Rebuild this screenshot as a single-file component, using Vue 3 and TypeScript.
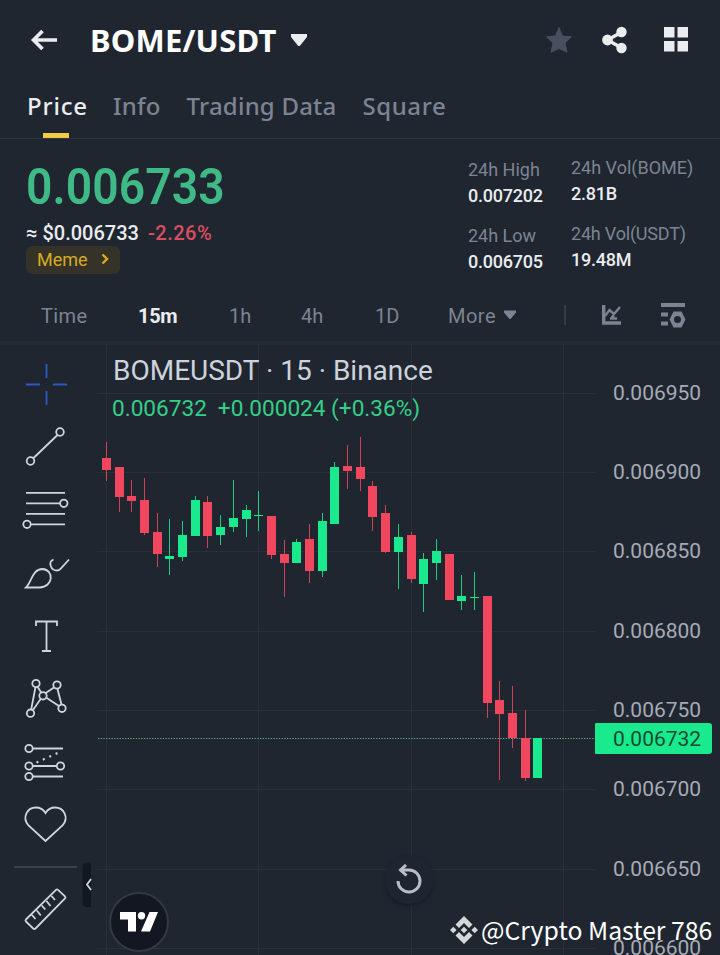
<script setup lang="ts">
interface Candle {
  x: number
  high: number
  top: number
  bottom: number
  low: number
  up: boolean
}

const tabs: string[] = ['Price', 'Info', 'Trading Data', 'Square']

const stats = [
  { id: 'high', label: '24h High', value: '0.007202' },
  { id: 'vol-base', label: '24h Vol(BOME)', value: '2.81B' },
  { id: 'low', label: '24h Low', value: '0.006705' },
  { id: 'vol-quote', label: '24h Vol(USDT)', value: '19.48M' },
]

const intervals: string[] = ['Time', '15m', '1h', '4h', '1D']

// Vertical positions are measured from the top edge of the chart panel (y = 345).
const TOP = 345
const rows: [number, number, number, number, number, 0 | 1][] = [
  [102, 442, 458, 470, 481, 0],
  [115, 467, 467, 497, 512, 0],
  [127, 480, 496, 501, 512, 0],
  [140, 478, 500, 533, 535, 0],
  [153, 513, 532, 554, 567, 0],
  [165, 519, 556, 559, 575, 1],
  [178, 521, 535, 557, 561, 1],
  [191, 496, 500, 536, 536, 1],
  [203, 496, 502, 536, 548, 0],
  [216, 515, 527, 535, 545, 1],
  [229, 480, 518, 527, 532, 1],
  [242, 505, 510, 519, 537, 1],
  [254, 491, 515, 516, 531, 1],
  [267, 516, 516, 555, 559, 0],
  [280, 540, 554, 563, 597, 0],
  [292, 539, 542, 563, 563, 1],
  [305, 524, 539, 571, 583, 0],
  [318, 513, 521, 571, 577, 1],
  [330, 462, 467, 524, 524, 1],
  [343, 445, 466, 471, 489, 0],
  [356, 437, 467, 479, 491, 0],
  [368, 481, 486, 517, 531, 0],
  [381, 505, 513, 552, 553, 0],
  [394, 524, 537, 552, 589, 1],
  [407, 532, 535, 579, 583, 0],
  [419, 553, 559, 584, 612, 1],
  [432, 539, 551, 563, 580, 1],
  [445, 554, 554, 600, 600, 0],
  [457, 575, 596, 601, 610, 1],
  [470, 572, 597, 598, 610, 1],
  [483, 596, 596, 703, 718, 0],
  [495, 681, 700, 714, 780, 0],
  [508, 686, 713, 738, 748, 0],
  [521, 710, 738, 778, 781, 0],
  [533, 738, 738, 778, 778, 1],
]
const candles: Candle[] = rows.map(([x, high, top, bottom, low, up]) => ({
  x: x - 97,
  high: high - TOP,
  top: top - TOP,
  bottom: bottom - TOP,
  low: low - TOP,
  up: up === 1,
}))

const levels = [
  { y: 48, label: '0.006950' },
  { y: 127, label: '0.006900' },
  { y: 206, label: '0.006850' },
  { y: 286, label: '0.006800' },
  { y: 365, label: '0.006750' },
  { y: 444, label: '0.006700' },
  { y: 524, label: '0.006650' },
  { y: 603, label: '0.006600' },
]
const columns: number[] = [9, 161, 314, 466]
</script>

<template>
  <main class="screen">
    <header class="topbar">
      <svg class="back" width="28" height="22" viewBox="0 0 28 22">
        <path d="M12.5 2 3.5 11l9 9M4 11h23" />
      </svg>
      <h1 class="pair">BOME/USDT</h1>
      <svg class="caret" width="18" height="14" viewBox="0 0 18 14">
        <path d="M1 1h16v3L10.2 12.4q-1.2 1.2-2.4 0L1 4z" />
      </svg>
      <svg class="star" width="28" height="28" viewBox="0 0 28 28">
        <path d="M14 1.5 17.5 10 26.5 10.8 20 17 22 26.3 14 22.5 6 26.3 8 17 1.5 10.8 10.5 10z" />
      </svg>
      <svg class="share" width="28" height="28" viewBox="0 0 28 28">
        <path d="M20 6.5 6.500 14 20 21.500" />
        <circle cx="20.500" cy="6" r="5.200" />
        <circle cx="6.500" cy="14" r="5.400" />
        <circle cx="20.500" cy="22" r="5.200" />
      </svg>
      <svg class="grid-icon" width="24" height="25" viewBox="0 0 24 25">
        <path d="M0 0h10.500v10.500H0zM13.500 0H24v10.500H13.500zM0 14h10.500v10.500H0zM13.500 14H24v10.500H13.500z" />
      </svg>
    </header>

    <nav class="tabs">
      <span v-for="(tab, i) in tabs" :key="tab" class="tab" :class="['tab-' + i, { active: i === 0 }]">{{ tab }}</span>
    </nav>

    <section class="summary">
      <div class="quote">
        <div class="price">0.006733</div>
        <div class="fiat">
          <span class="usd"><span class="approx">≈</span> $0.006733</span>
          <span class="change">-2.26%</span>
        </div>
        <div class="chip">
          <span>Meme</span>
          <svg width="8" height="12" viewBox="0 0 8 12"><path d="M1.500 1.500 6 6l-4.500 4.500" /></svg>
        </div>
      </div>
      <div class="stats">
        <div v-for="s in stats" :key="s.id" class="stat" :class="s.id">
          <span class="stat-label">{{ s.label }}</span>
          <span class="stat-value">{{ s.value }}</span>
        </div>
      </div>
    </section>

    <div class="intervals">
      <span v-for="(t, i) in intervals" :key="t" class="interval" :class="['int-' + i, { active: i === 1 }]">{{ t }}</span>
      <span class="interval more">More</span>
      <svg class="more-caret" width="12" height="10" viewBox="0 0 12 10"><path d="M0 .5h12v2L7 8.500q-1 1-2 0L0 2.500z" /></svg>
      <i class="separator"></i>
      <svg class="chart-icon" width="20" height="20" viewBox="0 0 20 20">
        <path class="axis" d="M1.700 0v18H19" />
        <path class="line" d="M3 11 7.500 5l4.500 4L18 2M8 13.500h7M9.500 12.500 12 10.500" />
      </svg>
      <svg class="indicator-icon" width="26" height="26" viewBox="0 0 26 26">
        <path d="M1 1h24v4H1zM1 10.500h7v4H1zM1 19.500h7v4H1z" />
        <path fill-rule="evenodd" d="M13.500 9.500h8L25.500 17.500l-4 8h-8L9.500 17.500zM17.500 14a3.500 3.500 0 1 0 0 7a3.500 3.500 0 1 0 0-7z" />
      </svg>
    </div>

    <section class="chart">
      <aside class="tools">
        <svg class="tool-icons" width="97" height="610" viewBox="0 345 97 610">
          <path class="cross" d="M46.500 364v14M46.500 391v14M26 384.500h14M53 384.500h14" />
          <g class="ink">
            <path d="M33 458.500 57.500 435" />
            <circle cx="30.500" cy="461" r="3.800" /><circle cx="60" cy="432" r="3.800" />
            <path d="M26 492.800h39M26 503.300h34M26 513.800h39M31 524.300h34" />
            <circle cx="63.800" cy="503.300" r="3.700" /><circle cx="27" cy="524.300" r="3.700" />
            <path d="M26 587.500C32 582 32 569 42.500 569c12 1 11 18-3 18.500zM53.500 559.500c-6 2.500-2.500 11 3.500 11 2 0 3-1.200 4-2.200L69 559.500" />
            <path d="M36 626v-4.500h21v4.500M46.500 621.500v29.500M42 651h9" />
            <path d="M35.500 687 31.200 709.500M37.500 686.700 41.500 693M45 693.500 54 687.500M57.500 689 61.500 704.500M46 697.500 59 706M41 698.500 33 710" />
            <circle cx="36" cy="683.500" r="3.700" /><circle cx="57" cy="685" r="3.700" /><circle cx="43" cy="695.800" r="3.700" /><circle cx="62" cy="708.300" r="3.700" /><circle cx="30.500" cy="713.200" r="3.700" />
            <path d="M33 748.500h30M33 766h23.500M33 776.500h30" />
            <path class="dots" d="M36.500 762.500 61 751.500" />
            <circle cx="29" cy="748.500" r="3.700" /><circle cx="29" cy="766" r="3.700" /><circle cx="60.500" cy="766" r="3.700" /><circle cx="29" cy="776.500" r="3.700" />
            <path d="M45.500 841 28.500 825.500c-7-8.500-1-18 7.500-18q6 0 9.500 5.500 3.500-5.500 9.500-5.500c8.500 0 14.500 9.500 7.500 18z" />
            <path d="M25.900 919.500 56 889.800q1-.9 2 0l7 6.500q1 1 0 2L35.500 928.500q-1.200 1-2.300 0L25.900 921.500q-.9-1 0-2zM32 915l3.500 4M36.800 910.500l4 5M41.800 905.500l3.500 4M46.500 901l4 5M51.500 896l3.500 4" />
          </g>
          <path class="rule" d="M14 867h63" />
          <path class="handle" d="M91 862.500h-3.500q-5 0-5 5v34.500q0 5 5 5H91z" />
          <path class="ink" d="M91 879l-4 5.500 4 5.500" />
        </svg>
      </aside>

      <div class="plot">
        <svg class="canvas" width="498" height="610" viewBox="0 0 498 610" shape-rendering="crispEdges">
          <rect v-for="l in levels" :key="l.label" class="gridline" x="0" :y="l.y" width="498" height="1" />
          <rect v-for="c in columns" :key="c" class="gridline" :x="c" y="0" width="1" height="610" />
          <path class="last" shape-rendering="auto" d="M1 393.500H498" />
          <g v-for="c in candles" :key="c.x" :class="c.up ? 'up' : 'down'">
            <rect class="wick" :x="c.x + 4" :y="c.high" width="1" :height="c.low - c.high" />
            <rect :x="c.x" :y="c.top" width="9" :height="c.bottom - c.top" />
          </g>
        </svg>
        <div class="legend">
          <div class="symbol">BOMEUSDT · 15 · Binance</div>
          <div class="ohlc"><span>0.006732</span><span>+0.000024 (+0.36%)</span></div>
        </div>
        <div class="reset">
          <svg width="28" height="32" viewBox="0 0 28 32">
            <path d="M3 17a11 11 0 1 0 11-11H6M11 1 5.500 6l6 5.500" />
          </svg>
        </div>
        <div class="tv">
          <svg width="38" height="20" viewBox="0 0 38 20">
            <path d="M0 0h16v19.500H8V7.500H0zM29.500 0H38l-8 19.500h-9z" /><circle cx="21.500" cy="3.800" r="3.700" />
          </svg>
        </div>
      </div>

      <div class="scale">
        <svg width="125" height="610" viewBox="0 0 125 610">
          <text v-for="l in levels" :key="l.label" x="18" :y="l.y + 7">{{ l.label }}</text>
        </svg>
        <div class="last-price">0.006732</div>
      </div>

      <div class="watermark">
        <svg width="28" height="28" viewBox="0 0 28 28">
          <path d="M14 0 22.500 8.500 19 12l-5-5-5 5-3.500-3.500zM14 28 5.500 19.500 9 16l5 5 5-5 3.500 3.500zM14 10.700 17.300 14 14 17.300 10.700 14zM3.300 10.700 6.600 14 3.300 17.300 0 14zM24.700 10.700 28 14l-3.300 3.300L21.400 14z" />
        </svg>
        <span>@Crypto Master 786</span>
      </div>
    </section>
  </main>
</template>

<style>
body {
  background: #1f2630;
}
</style>

<style scoped>
.screen {
  width: 720px;
  height: 955px;
  overflow: hidden;
  display: flex;
  flex-direction: column;
  background: #1f2630;
  color: #eaecef;
  font-family: Roboto, 'Liberation Sans', sans-serif;
  white-space: nowrap;
}
svg {
  display: block;
  flex: none;
}
.topbar {
  height: 80px;
  flex: none;
  box-sizing: border-box;
  display: flex;
  align-items: center;
  padding: 0 32px 1px 30px;
}
.back path {
  fill: none;
  stroke: #eaecef;
  stroke-width: 3.6;
}
.back {
  margin-right: 32px;
}
.pair {
  margin: 1px 0 0;
  width: 186px;
  font-family: 'Noto Sans', sans-serif;
  font-size: 31px;
  line-height: 40px;
  font-weight: 700;
  letter-spacing: 0.2px;
  color: #fff;
}
.caret {
  margin-left: 14px;
  fill: #eaecef;
}
.star {
  margin-left: auto;
  fill: #474f5e;
  stroke: #474f5e;
  stroke-linejoin: round;
}
.share {
  margin: 0 35px 0 28px;
  fill: #eaecef;
}
.share path {
  fill: none;
  stroke: #eaecef;
  stroke-width: 3.5;
}
.grid-icon {
  fill: #eaecef;
}
.tabs {
  height: 58px;
  flex: none;
  display: flex;
  gap: 26px;
  padding-left: 27px;
  border-bottom: 1px solid #2e3540;
  font-family: 'Noto Sans', sans-serif;
  font-size: 24px;
  font-weight: 500;
  letter-spacing: 0.2px;
  color: #7c8492;
}
.tab {
  display: flex;
  flex-direction: column;
  align-items: center;
  line-height: 51px;
}
.tab.active {
  width: 60px;
  align-items: flex-start;
  letter-spacing: 0.8px;
  color: #eaecef;
}
.tab.active::after {
  content: '';
  width: 26px;
  height: 5px;
  margin: 2px 0 0 16px;
  background: #f1cd45;
}
.tab-3 {
  letter-spacing: 0.6px;
}
.summary {
  height: 150px;
  flex: none;
  display: flex;
  justify-content: space-between;
}
.quote {
  padding: 18px 0 0 26px;
}
.price {
  width: 225px;
  font-size: 50px;
  line-height: 60px;
  font-weight: 600;
  transform: scaleX(0.925);
  transform-origin: left;
  letter-spacing: 0.1px;
  color: #3fb986;
}
.fiat {
  display: flex;
  gap: 10px;
  margin-top: 3px;
  font-size: 20px;
  line-height: 26px;
  font-weight: 500;
}
.usd {
  width: 112px;
}
.change {
  color: #dc4c62;
  font-weight: 500;
  letter-spacing: 0.5px;
}
.chip {
  width: 94px;
  height: 28px;
  box-sizing: border-box;
  display: flex;
  align-items: center;
  justify-content: space-between;
  padding: 0 11px 2px;
  border-radius: 6px;
  background: #353328;
  color: #d9ab25;
  font-size: 18px;
}
.chip path {
  fill: none;
  stroke: #d9ab25;
  stroke-width: 2.4;
}
.stats {
  width: 252px;
  display: grid;
  grid-template-columns: 103px 149px;
  grid-template-rows: 66px 66px;
  padding-top: 16px;
  font-size: 18px;
}
.stat {
  display: flex;
  flex-direction: column;
  line-height: 26px;
}
.high,
.low {
  padding-top: 2px;
}
.stat-label {
  color: #7c8492;
}
.stat-value {
  font-weight: 500;
  letter-spacing: -0.25px;
}
.vol-quote .stat-label {
  letter-spacing: -0.2px;
}
.intervals {
  height: 52px;
  flex: none;
  box-sizing: content-box;
  display: flex;
  align-items: center;
  padding-left: 41px;
  border-bottom: 4px solid #242b35;
  font-size: 20px;
  color: #7c8492;
}
.interval {
  padding-top: 2px;
}
.interval.active {
  color: #eaecef;
  font-weight: 700;
}
.int-0 {
  width: 97px;
  letter-spacing: 0.4px;
}
.int-1 {
  width: 91px;
  letter-spacing: -0.3px;
}
.int-2 {
  width: 72px;
}
.int-3 {
  width: 74px;
}
.int-4 {
  width: 73px;
}
.more {
  width: 56px;
  letter-spacing: 0.5px;
}
.more-caret {
  fill: #7c8492;
}
.separator {
  width: 2px;
  height: 20px;
  margin-left: 48px;
  background: #343b47;
}
.chart-icon {
  margin-left: 36px;
  fill: none;
  stroke: #7c8492;
}
.axis {
  stroke-width: 3.4;
}
.line {
  stroke-width: 2.4;
}
.indicator-icon {
  margin-left: 38px;
  fill: #7c8492;
}
.chart {
  position: relative;
  flex: none;
  height: 610px;
  display: flex;
}
.tools {
  width: 97px;
}
.cross {
  stroke: #2f59c8;
  stroke-width: 1.8;
}
.ink {
  fill: none;
  stroke: #d0d4df;
  stroke-width: 1.8;
}
.dots {
  stroke-width: 2.2;
  stroke-dasharray: 2 5;
}
.rule {
  stroke: #454c58;
  stroke-width: 1.5;
}
.handle {
  fill: #121821;
}
.plot {
  position: relative;
  width: 498px;
}
.gridline {
  fill: #28303a;
}
.last {
  stroke: #45b78d;
  stroke-dasharray: 1.3 1.4;
}
.up {
  fill: #19ea8e;
}
.down {
  fill: #f0475e;
}
.wick {
  opacity: 0.85;
}
.legend {
  position: absolute;
  left: 15px;
  top: 8px;
}
.symbol {
  font-size: 28px;
  line-height: 36px;
  padding-left: 1px;
  color: #ced2dc;
}
.ohlc {
  display: flex;
  gap: 11px;
  margin-top: 6px;
  font-size: 22.6px;
  line-height: 28px;
  color: #34cf87;
}
.reset {
  position: absolute;
  left: 288px;
  top: 511px;
  width: 48px;
  height: 48px;
  display: flex;
  align-items: center;
  justify-content: center;
  border-radius: 50%;
  background: #1f2530;
  box-shadow: 0 2px 4px #171c25;
}
.reset path {
  fill: none;
  stroke: #b9bdc9;
  stroke-width: 3;
}
.tv {
  position: absolute;
  left: 12px;
  top: 547px;
  width: 56px;
  height: 56px;
  display: flex;
  align-items: center;
  justify-content: center;
  border: 2px solid #323844;
  border-radius: 50%;
  background: #131722;
  fill: #fff;
}
.scale {
  position: relative;
  width: 125px;
}
.scale text {
  font-size: 21px;
  fill: #a6abb6;
}
.last-price {
  position: absolute;
  left: 0;
  top: 378px;
  width: 117px;
  height: 31px;
  box-sizing: border-box;
  padding-left: 18px;
  border-radius: 1px 3px 3px 1px;
  background: #19ea8e;
  color: #10492e;
  font-size: 21px;
  line-height: 32px;
}
.watermark {
  position: absolute;
  left: 450px;
  top: 567px;
  display: flex;
  align-items: center;
  gap: 3px;
  font-family: 'Noto Sans CJK SC', sans-serif;
  font-size: 24.8px;
  line-height: 38px;
  color: #fff;
}
.watermark span {
  margin-top: -2px;
}
.watermark svg {
  fill: #d5d6d8;
}
</style>
